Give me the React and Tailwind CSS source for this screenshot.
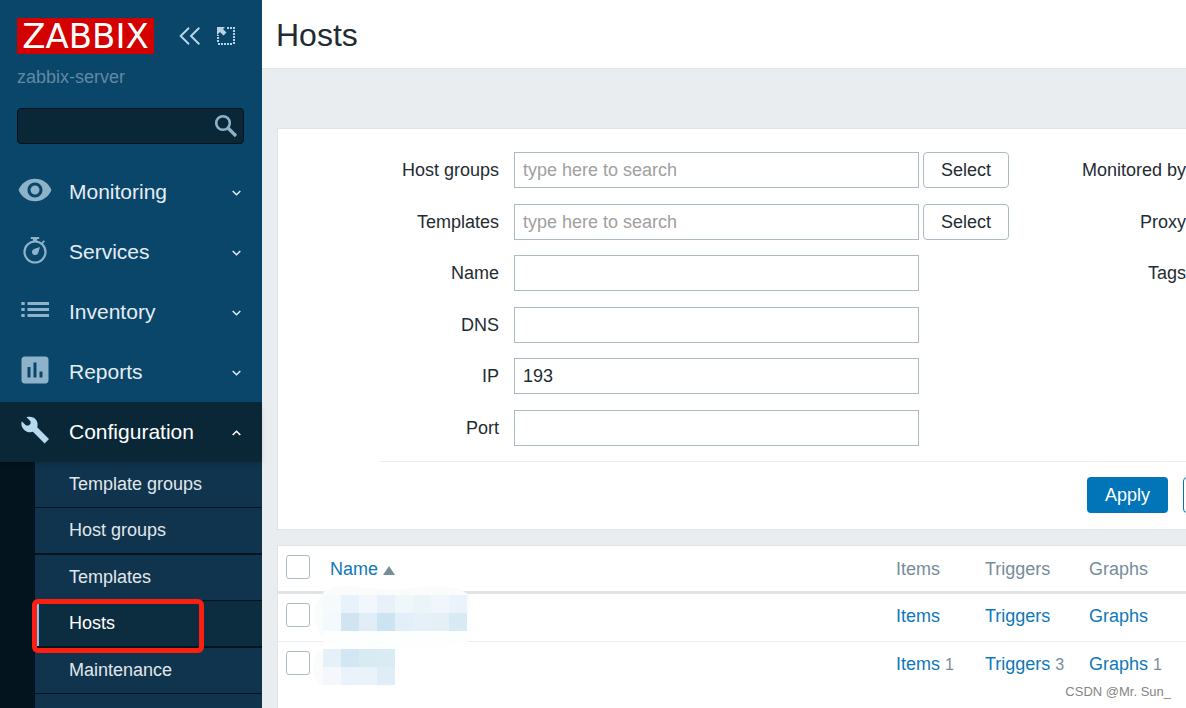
import React, { useState } from "react";
import { MdAssessment, MdVisibility } from "react-icons/md";

const TimerIcon = () => (
  <svg width="36" height="36" viewBox="0 0 36 36" fill="none">
    <circle cx="18" cy="20" r="10.5" stroke="currentColor" strokeWidth="2.2" />
    <path d="M13.8 5h8.4v2h-2.1v3h-4.2V7h-2.1z" fill="currentColor" />
    <path d="M24.8 11.4l2.6-2.6" stroke="currentColor" strokeWidth="1.8" />
    <path d="M23 15l-1.8 5.9a3.2 3.2 0 1 1-4.2-4z" fill="currentColor" />
  </svg>
);

const ListIcon = () => (
  <svg width="36" height="36" viewBox="0 0 36 36" fill="currentColor">
    <path d="M4.3 10h3.4v3H4.3zM10.5 10H32v3H10.5zM4.3 16h3.4v3H4.3zM10.5 16H32v3H10.5zM4.3 22h3.4v3H4.3zM10.5 22H32v3H10.5z" />
  </svg>
);

const WrenchIcon = () => (
  <svg width="36" height="36" viewBox="0 0 36 36" fill="currentColor">
    <path d="M9.5 5.2C13 4 17 5 19.2 8c1.5 2.2 1.8 4.8 1 7.3L32 27l-4.4 4.400-11.7-11.600c-3 1-6.300.3-8.600-1.900-2.600-2.500-3.500-5.400-2.600-8.700l4.400 4.400h2.600l1.800-1.800v-2.500z" />
  </svg>
);

const SearchIcon = () => (
  <svg
    width="28"
    height="28"
    viewBox="0 0 28 28"
    fill="none"
    stroke="currentColor"
  >
    <circle cx="11" cy="11" r="6.8" strokeWidth="2.6" />
    <path d="M16 16l8 8" strokeWidth="3.2" />
  </svg>
);

const Chevron = ({ up }) => (
  <svg
    width="9"
    height="6"
    viewBox="0 0 9 6"
    fill="none"
    stroke="currentColor"
    strokeWidth="1.5"
    className="mt-0.5"
  >
    <path d={up ? "M.7 5l3.8-3.8L8.3 5" : "M.7 1l3.8 3.8L8.3 1"} />
  </svg>
);

const menu = [
  { label: "Monitoring", icon: <MdVisibility size={36} /> },
  { label: "Services", icon: <TimerIcon /> },
  { label: "Inventory", icon: <ListIcon /> },
  { label: "Reports", icon: <MdAssessment size={36} /> },
  { label: "Configuration", icon: <WrenchIcon />, open: true },
];

const subMenu = [
  "Template groups",
  "Host groups",
  "Templates",
  "Hosts",
  "Maintenance",
];

const fields = [
  { id: "groups", label: "Host groups", select: true },
  { id: "templates", label: "Templates", select: true },
  { id: "name", label: "Name" },
  { id: "dns", label: "DNS" },
  { id: "ip", label: "IP" },
  { id: "port", label: "Port" },
];

const rows = [
  { id: 1, items: "", triggers: "", graphs: "" },
  { id: 2, items: 1, triggers: 3, graphs: 1 },
];

// x, y, colour of every hidden-name block
const blocks = [
  [0, 0, "#f5fafd"],
  [1, 0, "#e7f2fa"],
  [2, 0, "#f1f7fc"],
  [3, 0, "#e8f1fa"],
  [4, 0, "#f0f7fb"],
  [5, 0, "#ebf5f8"],
  [6, 0, "#f0f6fb"],
  [7, 0, "#eaf3fb"],
  [0, 1, "#f3f9fc"],
  [1, 1, "#d0e5f1"],
  [2, 1, "#e1eef7"],
  [3, 1, "#cce4f1"],
  [4, 1, "#e2eff8"],
  [5, 1, "#e6f0f9"],
  [6, 1, "#e4f0f6"],
  [7, 1, "#d8eaf3"],
  [0, 3, "#e6f0f9"],
  [1, 3, "#d3e6f3"],
  [2, 3, "#d8eaf2"],
  [3, 3, "#d9ebf3"],
  [0, 4, "#f4f8fc"],
  [1, 4, "#eaf3fb"],
  [2, 4, "#e9f3f9"],
  [3, 4, "#deedf6"],
];

const HiddenNames = () => (
  <svg
    className="absolute -left-3 -top-2.5"
    width="164"
    height="104"
    viewBox="0 0 164 104"
  >
    <path
      d="M14 8Q24 0 42 2Q72 6 94 5Q128 0 148 5Q156 8 160 12V45Q158 56 146 59Q120 63 96 62Q60 64 20 60Q6 50 4 32Q5 17 14 8z"
      fill="#fafbfb"
    />
    <path d="M13 29h148v24q-2 6-15 8-60 5-132 0z" fill="#fdfefe" />
    <path d="M13 65Q4 68 3 80Q3 94 10 101H14z" fill="#fafbfb" />
    {blocks.map(([x, y, fill], i) => (
      <rect
        key={i}
        x={x * 18 + 13}
        y={y * 18 + 11}
        width="18"
        height="18"
        fill={fill}
      />
    ))}
  </svg>
);

const Sidebar = () => {
  const [search, setSearch] = useState("");
  return (
    <aside className="flex h-full w-[262px] shrink-0 flex-col bg-[#0a466a]">
      <div className="flex h-[72px] items-center pl-[17px]">
        <a
          href="#dashboard"
          className="flex h-9 w-[137px] items-center justify-center bg-[#d40000] font-['DejaVu_Sans',sans-serif] text-[34px] leading-9 text-white"
        >
          ZABBIX
        </a>
        <button
          type="button"
          aria-label="Hide sidebar"
          className="ml-6 text-[#b9d3e4]"
        >
          <svg
            width="22"
            height="18"
            viewBox="0 0 22 18"
            fill="none"
            stroke="currentColor"
            strokeWidth="2"
          >
            <path d="M11 .8L2.700 9l8.300 8.200M21.300.8L13 9l8.300 8.200" />
          </svg>
        </button>
        <button
          type="button"
          aria-label="Kiosk mode"
          className="ml-[17px] text-[#b9d3e4]"
        >
          <svg width="18" height="18" viewBox="0 0 18 18" fill="currentColor">
            <path d="M0 0h8L6 2l3.500 3.500-3 3L3 5 0 8z" />
            <path
              d="M10 1h8M17 3v15M15 17H0M1 15V8"
              fill="none"
              stroke="currentColor"
              strokeWidth="2"
              strokeDasharray="2 1"
            />
          </svg>
        </button>
      </div>
      <div className="-mt-1.5 px-[17px] leading-[22px] text-[#6189a5]">
        zabbix-server
      </div>
      <div className="relative mt-5 mb-[18px] ml-[17px] mr-[18px]">
        <input
          type="text"
          aria-label="Search"
          value={search}
          onChange={(e) => setSearch(e.target.value)}
          className="block h-9 w-full rounded border border-[#03111a] bg-[#0a2737] pl-2 pr-9 text-white outline-none"
        />
        <button
          type="button"
          aria-label="Run search"
          className="absolute right-1 top-1 text-[#8db2ca]"
        >
          <SearchIcon />
        </button>
      </div>
      <nav className="flex min-h-0 flex-1 flex-col">
        {menu.map((item) => (
          <a
            key={item.label}
            href={"#" + item.label.toLowerCase()}
            className={
              item.open
                ? "z-10 flex h-[60px] shrink-0 items-center bg-[#0a2737] pl-[17px] pr-[21px] text-[21px] text-white shadow-md"
                : "flex h-[60px] shrink-0 items-center pl-[17px] pr-[21px] text-[21px] text-[#e6edf2]"
            }
          >
            <span
              className={
                item.open ? "pb-1 text-[#b8d8ee]" : "pb-1 text-[#8db2ca]"
              }
            >
              {item.icon}
            </span>
            <span className="ml-4 flex-1">{item.label}</span>
            <Chevron up={item.open} />
          </a>
        ))}
        <ul className="flex min-h-0 flex-1 flex-col bg-[#04141e] pl-[35px]">
          {subMenu.map((label) => (
            <li
              key={label}
              className="relative box-content h-[45px] shrink-0 border-b border-[#04141e] even:border-b-2"
            >
              <a
                href={"#" + label.toLowerCase().replace(" ", "-")}
                className={
                  label === "Hosts"
                    ? "flex h-full items-center border-l-4 border-[#7fc5f2] bg-[#0c2c3f] pb-0.5 pl-[30px] text-white"
                    : "flex h-full items-center bg-[#10344d] pb-0.5 pl-[34px] text-[#e0e7ec]"
                }
              >
                {label}
              </a>
              {label === "Hosts" && (
                <div className="pointer-events-none absolute -left-[3px] -top-0.5 z-10 h-[54px] w-[172px] rounded-md border-[5px] border-[#ff1f12]" />
              )}
            </li>
          ))}
          <li className="flex-1 bg-[#10344d]" />
        </ul>
      </nav>
    </aside>
  );
};

const Filter = () => {
  const [values, setValues] = useState({ ip: "193" });
  return (
    <form className="mt-[59px] overflow-hidden border border-r-0 border-[#dfe4e7] bg-white pb-4 pt-[23px]">
      <div className="flex">
        <div className="flex flex-col">
          {fields.map((field) => (
            <div
              key={field.id}
              className="mb-4 flex h-9 items-center even:mb-[15px]"
            >
              <label
                htmlFor={field.id}
                className="w-[221px] shrink-0 text-right"
              >
                {field.label}
              </label>
              <input
                id={field.id}
                type="text"
                value={values[field.id] || ""}
                placeholder={field.select ? "type here to search" : ""}
                onChange={(e) =>
                  setValues({ ...values, [field.id]: e.target.value })
                }
                className="ml-[15px] h-9 w-[405px] shrink-0 border border-[#acbbc2] px-2 outline-none placeholder:text-[#a0a0a0]"
              />
              {field.select && (
                <button
                  type="button"
                  className="ml-1 h-9 w-[86px] shrink-0 rounded-sm border border-[#acbbc2]"
                >
                  Select
                </button>
              )}
            </div>
          ))}
        </div>
        <div className="ml-[72px] w-[105px] shrink-0 whitespace-nowrap text-right">
          <div className="mb-4 h-9 leading-9">Monitored by</div>
          <div className="mb-[15px] h-9 leading-9">Proxy</div>
          <div className="h-9 leading-9">Tags</div>
        </div>
      </div>
      <div className="ml-[101px] flex w-[1594px] justify-center gap-[15px] border-t border-[#ebeef0] pt-[15px]">
        <button
          type="button"
          className="h-9 w-[81px] rounded-sm bg-[#0275b8] text-white"
        >
          Apply
        </button>
        <button
          type="button"
          aria-label="Reset"
          className="h-9 w-[82px] rounded-sm border border-[#0275b8]"
        />
      </div>
    </form>
  );
};

const Checkbox = ({ label }) => (
  <input
    type="checkbox"
    aria-label={label}
    className="block size-6 appearance-none rounded-[3px] border border-[#acbbc2] bg-white checked:bg-[#0275b8]"
  />
);

const CountLink = ({ label, count }) => (
  <>
    <a href={"#" + label.toLowerCase()} className="text-[#0f78b8]">
      {label}
    </a>
    {count !== "" && (
      <span className="ml-[5px] text-base text-[#768d99]">{count}</span>
    )}
  </>
);

const HostTable = () => (
  <div className="mt-[15px] flex-1 border-l border-t border-[#dfe4e7] bg-white">
    <table className="w-full table-fixed border-separate border-spacing-0 text-left">
      <colgroup>
        <col className="w-11" />
        <col />
        <col className="w-[89px]" />
        <col className="w-[104px]" />
        <col className="w-[105px]" />
      </colgroup>
      <thead>
        <tr className="h-12 text-[#768d99] [&>th]:border-b-3 [&>th]:border-[#dfe4e7] [&>th]:font-normal">
          <th className="pb-1 pl-2">
            <Checkbox label="Select all hosts" />
          </th>
          <th className="pl-2">
            <a href="#sort" className="flex items-center gap-[5px] text-[#0f78b8]">
              Name
              <svg width="12" height="9" viewBox="0 0 12 9" className="mt-1">
                <path d="M6 0l6 9H0z" fill="#768d99" />
              </svg>
            </a>
          </th>
          <th className="pl-2">Items</th>
          <th className="pl-2">Triggers</th>
          <th className="pl-2">Graphs</th>
        </tr>
      </thead>
      <tbody>
        {rows.map((row, index) => (
          <tr
            key={row.id}
            className="h-12 [&>td]:border-b [&>td]:border-[#ebeef0] last:[&>td]:border-b-0"
          >
            <td className="pb-1.5 pl-2">
              <Checkbox label={"Select host " + row.id} />
            </td>
            <td className="relative">{index === 0 && <HiddenNames />}</td>
            <td className="pb-1 pl-2">
              <CountLink label="Items" count={row.items} />
            </td>
            <td className="pb-1 pl-2">
              <CountLink label="Triggers" count={row.triggers} />
            </td>
            <td className="pb-1 pl-2">
              <CountLink label="Graphs" count={row.graphs} />
            </td>
          </tr>
        ))}
      </tbody>
    </table>
  </div>
);

const App = () => {
  return (
    <div className="relative flex h-screen overflow-hidden bg-[#e9edf0] font-['Liberation_Sans',Arial,sans-serif] text-lg leading-6 text-[#1f2c33]">
      <Sidebar />
      <main className="flex min-w-0 flex-1 flex-col">
        <header className="flex h-[69px] shrink-0 items-center border-b border-[#dfe4e7] bg-white pl-3.5 pt-0.5">
          <h1 className="text-[32px] leading-10">Hosts</h1>
        </header>
        <div className="flex flex-1 flex-col pl-[15px]">
          <Filter />
          <HostTable />
        </div>
      </main>
      <div className="absolute bottom-1.5 right-[15px] text-[13px] leading-5 text-[#858585]">
        CSDN @Mr. Sun_
      </div>
    </div>
  );
};

export default App;
